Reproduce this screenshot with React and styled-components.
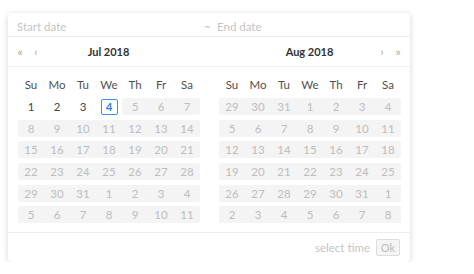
import React from 'react';
import styled, {createGlobalStyle} from 'styled-components';

const GlobalStyle = createGlobalStyle`
  body {
    margin: 0;
    background: #fff;
    font-family: Lato, "Open Sans", sans-serif;
  }
`;

const buildMonth = (firstWeekday, days, prevDays) => {
    const cells = [];
    for (let i = firstWeekday - 1; i >= 0; i--) {
        cells.push({day: prevDays - i, outside: true});
    }
    for (let d = 1; d <= days; d++) {
        cells.push({day: d, outside: false});
    }
    let next = 1;
    while (cells.length < 42) {
        cells.push({day: next++, outside: true});
    }
    return cells;
};

const weekDays = ['Su', 'Mo', 'Tu', 'We', 'Th', 'Fr', 'Sa'];

const Calendar = ({title, cells, today, enabledUntil, side}) => {
    const rows = [];
    for (let r = 0; r < 6; r++) rows.push(cells.slice(r * 7, r * 7 + 7));

    return (
        <Half>
            <Header>
                <Nav>
                    {side === 'left' && <>
                        <Arrow>«</Arrow>
                        <Arrow>‹</Arrow>
                    </>}
                </Nav>
                <Title>{title}</Title>
                <Nav $right>
                    {side === 'right' && <>
                        <Arrow>›</Arrow>
                        <Arrow>»</Arrow>
                    </>}
                </Nav>
            </Header>
            <Body>
                <Grid>
                    {weekDays.map(w => <WeekDay key={w}>{w}</WeekDay>)}
                </Grid>
                {rows.map((row, ri) =>
                    <Grid key={ri}>
                        {row.map((cell, ci) => {
                            const disabled = cell.outside || cell.day > enabledUntil;
                            const isToday = !cell.outside && cell.day === today;
                            const prevDisabled = ci > 0 && (row[ci - 1].outside || row[ci - 1].day > enabledUntil);
                            const nextDisabled = ci < 6 && (row[ci + 1].outside || row[ci + 1].day > enabledUntil);
                            return (
                                <Cell key={ci}>
                                    <DateBox
                                        $disabled={disabled}
                                        $roundLeft={!prevDisabled}
                                        $roundRight={!nextDisabled}
                                    >
                                        {isToday ? <TodayMark>{cell.day}</TodayMark> : cell.day}
                                    </DateBox>
                                </Cell>
                            );
                        })}
                    </Grid>
                )}
            </Body>
        </Half>
    );
};

const App = () => {
    const july = buildMonth(0, 31, 30);
    const august = buildMonth(3, 31, 31);

    return (
        <Page>
            <GlobalStyle/>
            <Panel>
                <InputRow>
                    <Field>Start date</Field>
                    <Separator>~</Separator>
                    <Field $end>End date</Field>
                </InputRow>
                <Calendars>
                    <Calendar side="left" title="Jul 2018" cells={july} today={4} enabledUntil={4}/>
                    <Calendar side="right" title="Aug 2018" cells={august} today={-1} enabledUntil={0}/>
                </Calendars>
                <Footer>
                    <SelectTime>select time</SelectTime>
                    <OkButton>Ok</OkButton>
                </Footer>
            </Panel>
        </Page>
    );
};

const Page = styled.div`
  padding: 13px 0 0 8px;
`;

const Panel = styled.div`
  width: 402px;
  background: #fff;
  border-radius: 4px;
  box-shadow: 0 1px 6px rgba(0, 0, 0, 0.16);
  font-size: 11.5px;
  color: #4a4a4a;
`;

const InputRow = styled.div`
  display: flex;
  align-items: center;
  height: 24px;
  padding-top: 4px;
  border-bottom: 1px solid #ececec;
  box-sizing: border-box;
`;

const Field = styled.div`
  width: ${p => p.$end ? 'auto' : '185px'};
  padding-left: ${p => p.$end ? '5px' : '9px'};
  color: #c4c4c4;
`;

const Separator = styled.div`
  width: 10px;
  text-align: center;
  color: #b8b8b8;
  font-family: "Open Sans", sans-serif;
  font-size: 10px;
`;

const Calendars = styled.div`
  display: flex;
`;

const Half = styled.div`
  width: 201px;
`;

const Header = styled.div`
  display: flex;
  align-items: center;
  height: 30px;
  border-bottom: 1px solid #f0f0f0;
  box-sizing: border-box;
  padding: 0 8px;
`;

const Nav = styled.div`
  width: 40px;
  display: flex;
  gap: 8px;
  justify-content: ${p => p.$right ? 'flex-end' : 'flex-start'};
`;

const Arrow = styled.span`
  color: #a8a8a8;
  font-size: 12px;
  width: 8px;
  text-align: center;
`;

const Title = styled.div`
  flex: 1;
  text-align: center;
  font-weight: 700;
  font-size: 11px;
  color: #333;
`;

const Body = styled.div`
  padding: 7px 9px 6px 10px;
`;

const Grid = styled.div`
  display: grid;
  grid-template-columns: repeat(7, 26px);
  height: 21.7px;
  align-items: center;
`;

const WeekDay = styled.div`
  text-align: center;
  color: #505050;
`;

const Cell = styled.div`
  display: flex;
  justify-content: center;
`;

const DateBox = styled.div`
  width: 100%;
  height: 17px;
  line-height: 17px;
  text-align: center;
  color: ${p => p.$disabled ? '#bdbdbd' : '#444'};
  background: ${p => p.$disabled ? '#f4f4f4' : 'transparent'};
  border-top-left-radius: ${p => p.$roundLeft ? '2px' : '0'};
  border-bottom-left-radius: ${p => p.$roundLeft ? '2px' : '0'};
  border-top-right-radius: ${p => p.$roundRight ? '2px' : '0'};
  border-bottom-right-radius: ${p => p.$roundRight ? '2px' : '0'};
`;

const TodayMark = styled.span`
  display: inline-block;
  width: 15px;
  height: 14px;
  line-height: 14px;
  border: 1px solid #3c8fe6;
  border-radius: 2px;
  color: #2f7fd8;
  font-weight: 700;
`;

const Footer = styled.div`
  display: flex;
  align-items: center;
  justify-content: flex-end;
  height: 29px;
  border-top: 1px solid #ececec;
  padding-right: 10px;
`;

const SelectTime = styled.span`
  color: #c4c4c4;
  margin-right: 6px;
`;

const OkButton = styled.button`
  width: 24px;
  height: 17px;
  padding: 0;
  border: 1px solid #dcdcdc;
  border-radius: 2px;
  background: #f5f5f5;
  color: #bdbdbd;
  font-family: inherit;
  font-size: 11px;
  line-height: 15px;
`;

export default App;
